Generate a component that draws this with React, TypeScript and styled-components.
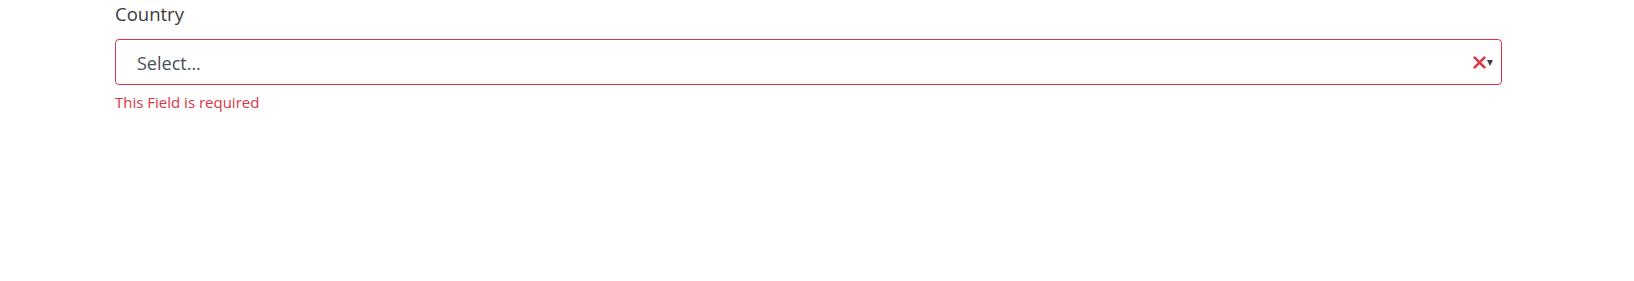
import styled, { createGlobalStyle } from 'styled-components';

const GlobalStyle = createGlobalStyle`
  body {
    margin: 0;
    background: #ffffff;
    font-family: 'Open Sans', 'Noto Sans', sans-serif;
  }
`;

const Page = styled.div`
  width: 1634px;
  height: 281px;
  padding: 0 132px 0 115px;
  box-sizing: border-box;
`;

const Field = styled.div`
  display: flex;
  flex-direction: column;
`;

const Label = styled.label`
  font-size: 18.5px;
  line-height: 28px;
  color: #3a3a3a;
  margin-bottom: 11px;
`;

const SelectBox = styled.div<{ $invalid?: boolean }>`
  display: flex;
  align-items: center;
  height: 46px;
  box-sizing: border-box;
  border: 1px solid ${({ $invalid }) => ($invalid ? '#dc3545' : '#ced4da')};
  border-radius: 4px;
  padding: 0 8px 0 21px;
  background: #ffffff;
`;

const Placeholder = styled.span`
  flex: 1;
  font-size: 18px;
  color: #495057;
  padding-top: 1px;
`;

const Indicators = styled.div`
  display: flex;
  align-items: center;
  gap: 1px;
`;

const ClearIcon = styled.svg`
  display: block;
  width: 13px;
  height: 13px;
`;

const Caret = styled.span`
  display: block;
  width: 0;
  height: 0;
  border-left: 3.5px solid transparent;
  border-right: 3.5px solid transparent;
  border-top: 6px solid #3d3d4f;
  margin-top: 1px;
`;

const ErrorText = styled.div`
  font-size: 15px;
  line-height: 22px;
  color: #dc3545;
  margin-top: 6px;
`;

const App = () => (
  <>
    <GlobalStyle />
    <Page>
      <Field>
        <Label>Country</Label>
        <SelectBox $invalid>
          <Placeholder>Select...</Placeholder>
          <Indicators>
            <ClearIcon viewBox="0 0 12 12">
              <path d="M1.5 1.5 L10.5 10.5 M10.5 1.5 L1.5 10.5" stroke="#dc3545" strokeWidth="2.4" strokeLinecap="round" />
            </ClearIcon>
            <Caret />
          </Indicators>
        </SelectBox>
        <ErrorText>This Field is required</ErrorText>
      </Field>
    </Page>
  </>
);

export default App;
